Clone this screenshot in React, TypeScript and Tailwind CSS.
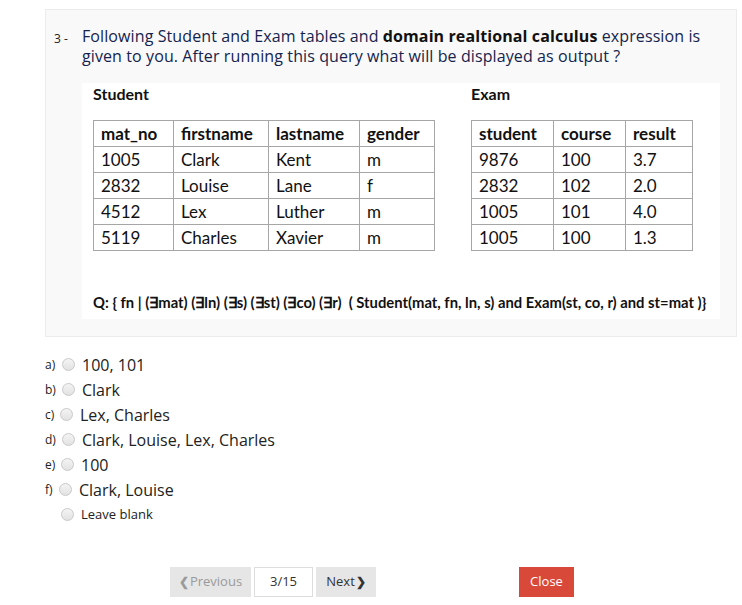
import React from 'react';

const students = [
  ['1005', 'Clark', 'Kent', 'm'],
  ['2832', 'Louise', 'Lane', 'f'],
  ['4512', 'Lex', 'Luther', 'm'],
  ['5119', 'Charles', 'Xavier', 'm'],
];

const exams = [
  ['9876', '100', '3.7'],
  ['2832', '102', '2.0'],
  ['1005', '101', '4.0'],
  ['1005', '100', '1.3'],
];

const options = [
  { label: 'a)', text: '100, 101', gap: 'ml-[1px]' },
  { label: 'b)', text: 'Clark', gap: 'ml-[1px]' },
  { label: 'c)', text: 'Lex, Charles', gap: 'ml-[-1px]' },
  { label: 'd)', text: 'Clark, Louise, Lex, Charles', gap: 'ml-[1px]' },
  { label: 'e)', text: '100', gap: 'ml-[0px]' },
  { label: 'f)', text: 'Clark, Louise', gap: 'ml-[-2px]' },
];

const Radio = () => (
  <span className="inline-block w-[13px] h-[13px] rounded-full border border-[#c9c9c9] bg-gradient-to-b from-[#f4f4f4] to-[#e2e2e2]" />
);

const cell = 'border border-[#a6a6a6] pl-[7px] text-left h-[26px] leading-none';

function DataTable({ head, rows, widths }: { head: string[]; rows: string[][]; widths: string[] }) {
  return (
    <table className="border-collapse text-[17px] text-[#111]" style={{ fontFamily: 'Lato, "Open Sans", sans-serif' }}>
      <thead>
        <tr>
          {head.map((h, i) => (
            <th key={h} className={`${cell} ${widths[i]} font-bold h-[25px]`}>
              {h}
            </th>
          ))}
        </tr>
      </thead>
      <tbody>
        {rows.map((r, ri) => (
          <tr key={ri}>
            {r.map((c, ci) => (
              <td key={ci} className={cell}>
                {c}
              </td>
            ))}
          </tr>
        ))}
      </tbody>
    </table>
  );
}

export default function App() {
  return (
    <div className="bg-white w-[742px] h-[605px] pt-[9px]" style={{ fontFamily: '"Open Sans", sans-serif' }}>
      {/* Question panel */}
      <div className="ml-[45px] w-[692px] h-[328px] bg-[#f9f9f9] border border-[#ececec] pt-[16px]">
        <div className="flex">
          <span className="w-[36px] pl-[8px] pt-[3px] text-[12px] text-[#222] leading-[20px]">3 -</span>
          <p className="text-[16px] leading-[20px] tracking-[0.1px] text-[#15244e]">
            Following Student and Exam tables and <b className="font-bold text-[#111]">domain realtional calculus</b> expression is
            <br />
            given to you. After running this query what will be displayed as output ?
          </p>
        </div>

        {/* Image with tables */}
        <div className="ml-[36px] mt-[17px] w-[638px] h-[236px] bg-white pt-[1px] pl-[11px]">
          <div className="flex">
            <div className="w-[378px]">
              <div className="text-[16px] leading-[20px] font-bold text-[#111] h-[36px]" style={{ fontFamily: 'Lato, sans-serif' }}>
                Student
              </div>
              <DataTable
                head={['mat_no', 'firstname', 'lastname', 'gender']}
                rows={students}
                widths={['w-[80px]', 'w-[95px]', 'w-[91px]', 'w-[75px]']}
              />
            </div>
            <div>
              <div className="text-[16px] leading-[20px] font-bold text-[#111] h-[36px]" style={{ fontFamily: 'Lato, sans-serif' }}>
                Exam
              </div>
              <DataTable
                head={['student', 'course', 'result']}
                rows={exams}
                widths={['w-[82px]', 'w-[72px]', 'w-[67px]']}
              />
            </div>
          </div>
          <div
            className="mt-[42px] text-[14.8px] leading-[18px] font-bold text-[#111] whitespace-nowrap"
            style={{ fontFamily: 'Lato, sans-serif' }}
          >
            Q: {'{'} fn | (∃mat) (∃ln) (∃s) (∃st) (∃co) (∃r)&nbsp; ( Student(mat, fn, ln, s) and Exam(st, co, r) and st=mat ){'}'}
          </div>
        </div>
      </div>

      {/* Options */}
      <div className="ml-[45px] mt-[15px] flex flex-col">
        {options.map((o) => (
          <div key={o.label} className="flex items-center h-[25px]">
            <span className="w-[16px] text-[12px] text-[#222]">{o.label}</span>
            <span className={o.gap}>
              <Radio />
            </span>
            <span className="ml-[7px] text-[16px] text-[#222]">{o.text}</span>
          </div>
        ))}
        <div className="flex items-center h-[25px]">
          <span className="w-[16px]" />
          <span className="ml-[0px]">
            <Radio />
          </span>
          <span className="ml-[7px] text-[13px] text-[#222]">Leave blank</span>
        </div>
      </div>

      {/* Navigation */}
      <div className="flex items-center mt-[40px] ml-[170px]">
        <button className="w-[81px] h-[30px] bg-[#e6e6e6] text-[13px] text-[#9a9a9a] flex items-center justify-center">
          <span className="font-bold text-[12px] mr-[1px]">❮</span>Previous
        </button>
        <div className="ml-[3px] w-[59px] h-[30px] border border-[#dddddd] bg-white text-[13px] text-[#333] flex items-center justify-center">
          3/15
        </div>
        <button className="ml-[3px] w-[60px] h-[30px] bg-[#e6e6e6] text-[13px] text-[#333] flex items-center justify-center">
          Next<span className="font-bold text-[12px] ml-[1px]">❯</span>
        </button>
        <button className="ml-[143px] w-[55px] h-[30px] bg-[#d9493a] text-[13px] text-white flex items-center justify-center">
          Close
        </button>
      </div>
    </div>
  );
}
